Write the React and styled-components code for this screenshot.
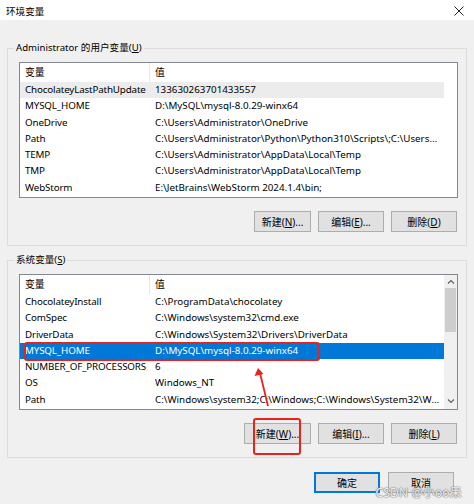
import styled, { createGlobalStyle } from "styled-components"

const GlobalStyle = createGlobalStyle`
  body {
    margin: 0;
    background: #f0f0f0;
    font-family: "Segoe UI", "Noto Sans", "Noto Sans CJK SC", sans-serif;
    font-size: 9.8px;
    color: #000;
  }
`

const Window = styled.div`
  position: relative;
  width: 474px;
  height: 504px;
  background: #f0f0f0;
  overflow: hidden;
  display: flex;
  flex-direction: column;
`

const TitleBar = styled.div`
  height: 20px;
  background: #fff;
  display: flex;
  align-items: center;
  justify-content: space-between;
  padding: 2px 10px 0 6px;
  box-sizing: border-box;
  font-size: 9.6px;
`

const Body = styled.div`
  padding: 0 7px;
  display: flex;
  flex-direction: column;
`

const Group = styled.fieldset`
  margin: ${(p) => p.$top}px 0 0;
  padding: 0 8px 13px 11px;
  border: 1px solid #dcdcdc;
  min-width: 0;
`

const Legend = styled.legend`
  margin-left: -5px;
  padding: 0 2px;
  line-height: 14px;
  font-size: 9.6px;
`

const ListBox = styled.div`
  margin-top: 7px;
  height: 136px;
  box-sizing: border-box;
  border: 1px solid #828790;
  background: #fff;
  display: flex;
`

const Table = styled.div`
  width: 424px;
  display: flex;
  flex-direction: column;
`

const Row = styled.div`
  display: flex;
  height: ${(p) => (p.$header ? "19px" : "16.3px")};
  align-items: center;
  background: ${(p) => (p.$selected ? "#0078d7" : p.$hover ? "#ececec" : "transparent")};
  color: ${(p) => (p.$selected ? "#fff" : "#000")};
  white-space: nowrap;
`

const Cell = styled.div`
  box-sizing: border-box;
  width: ${(p) => p.$w}px;
  flex-shrink: 0;
  padding-left: 5px;
  overflow: ${(p) => (p.$clip ? "hidden" : "visible")};
  text-overflow: ellipsis;
  letter-spacing: ${(p) => (p.$name ? "-0.15px" : "0")};
  border-right: ${(p) => (p.$sep ? "1px solid #e5e5e5" : "none")};
  height: 100%;
  line-height: ${(p) => (p.$head ? "19px" : "16.3px")};
`

const Scrollbar = styled.div`
  width: 13px;
  background: #f0f0f0;
  display: flex;
  flex-direction: column;
  align-items: center;
`

const ScrollArrow = styled.div`
  height: ${(p) => (p.$down ? 16 : 13)}px;
  display: flex;
  align-items: center;
  justify-content: center;
`

const Thumb = styled.div`
  width: 11px;
  height: 44px;
  background: #cdcdcd;
`

const Spacer = styled.div`
  flex: 1;
`

const ButtonRow = styled.div`
  display: flex;
  justify-content: flex-end;
  gap: 7px;
  margin-top: 13px;
  padding-right: 1px;
`

const Button = styled.div`
  box-sizing: border-box;
  width: ${(p) => p.$w || 66}px;
  height: 21px;
  background: #e1e1e1;
  border: ${(p) => (p.$default ? "2px solid #0078d7" : "1px solid #adadad")};
  display: flex;
  align-items: center;
  justify-content: center;
  font-size: 10px;
  u {
    text-decoration: underline;
  }
`

const DialogButtons = styled.div`
  display: flex;
  justify-content: flex-end;
  gap: 8px;
  margin-top: 14px;
  padding-right: 13px;
`

const Mark = styled.div`
  position: absolute;
  border: 2px solid #e8231c;
  border-radius: 3px;
  left: ${(p) => p.$x}px;
  top: ${(p) => p.$y}px;
  width: ${(p) => p.$w}px;
  height: ${(p) => p.$h}px;
  box-sizing: border-box;
  pointer-events: none;
`

const Arrow = styled.svg`
  position: absolute;
  left: 250px;
  top: 362px;
  pointer-events: none;
`

const Watermark = styled.div`
  position: absolute;
  right: 12px;
  bottom: 3px;
  font-size: 12px;
  color: rgba(255, 255, 255, 0.9);
  text-shadow: 0 0 1px #777, 0 0 1px #777, 0 0 2px #999;
  letter-spacing: 0.2px;
`

const Chevron = ({ up }) => (
  <svg width="8" height="5" viewBox="0 0 8 5">
    <path
      d={up ? "M1 4.5 L4 1.5 L7 4.5" : "M1 0.5 L4 3.5 L7 0.5"}
      fill="none"
      stroke="#606060"
      strokeWidth="1.2"
    />
  </svg>
)

const userVars = [
  ["ChocolateyLastPathUpdate", "133630263701433557"],
  ["MYSQL_HOME", "D:\\MySQL\\mysql-8.0.29-winx64"],
  ["OneDrive", "C:\\Users\\Administrator\\OneDrive"],
  ["Path", "C:\\Users\\Administrator\\Python\\Python310\\Scripts\\;C:\\Users\\Administrator\\AppData"],
  ["TEMP", "C:\\Users\\Administrator\\AppData\\Local\\Temp"],
  ["TMP", "C:\\Users\\Administrator\\AppData\\Local\\Temp"],
  ["WebStorm", "E:\\JetBrains\\WebStorm 2024.1.4\\bin;"],
]

const sysVars = [
  ["ChocolateyInstall", "C:\\ProgramData\\chocolatey"],
  ["ComSpec", "C:\\Windows\\system32\\cmd.exe"],
  ["DriverData", "C:\\Windows\\System32\\Drivers\\DriverData"],
  ["MYSQL_HOME", "D:\\MySQL\\mysql-8.0.29-winx64"],
  ["NUMBER_OF_PROCESSORS", "6"],
  ["OS", "Windows_NT"],
  ["Path", "C:\\Windows\\system32;C:\\Windows;C:\\Windows\\System32\\Wbem;C:\\Windows"],
]

const VarList = ({ rows, hover, selected, scroll }) => (
  <ListBox>
    <Table>
      <Row $header>
        <Cell $w={130} $sep $head>变量</Cell>
        <Cell $w={294} $head>值</Cell>
      </Row>
      {rows.map(([name, value], i) => (
        <Row key={name + i} $hover={i === hover} $selected={i === selected}>
          <Cell $w={130} $name>
            {name}
          </Cell>
          <Cell $w={290} $clip>
            {value}
          </Cell>
        </Row>
      ))}
    </Table>
    {scroll && (
      <Scrollbar>
        <ScrollArrow>
          <Chevron up />
        </ScrollArrow>
        <Thumb />
        <Spacer />
        <ScrollArrow $down>
          <Chevron />
        </ScrollArrow>
      </Scrollbar>
    )}
  </ListBox>
)

const App = () => {
  return (
    <Window>
      <GlobalStyle />
      <TitleBar>
        <span>环境变量</span>
        <svg width="10" height="10" viewBox="0 0 10 10">
          <path d="M0.5 0.5 L9.5 9.5 M9.5 0.5 L0.5 9.5" stroke="#222" strokeWidth="1" />
        </svg>
      </TitleBar>
      <Body>
        <Group $top={21}>
          <Legend>
            Administrator 的用户变量(<u>U</u>)
          </Legend>
          <VarList rows={userVars} hover={0} />
          <ButtonRow>
            <Button $w={57}>
              新建(<u>N</u>)...
            </Button>
            <Button>
              编辑(<u>E</u>)...
            </Button>
            <Button>
              删除(<u>D</u>)
            </Button>
          </ButtonRow>
        </Group>
        <Group $top={7}>
          <Legend>
            系统变量(<u>S</u>)
          </Legend>
          <VarList rows={sysVars} selected={3} scroll />
          <ButtonRow>
            <Button $w={67}>
              新建(<u>W</u>)...
            </Button>
            <Button>
              编辑(<u>I</u>)...
            </Button>
            <Button>
              删除(<u>L</u>)
            </Button>
          </ButtonRow>
        </Group>
        <DialogButtons>
          <Button $default>确定</Button>
          <Button>取消</Button>
        </DialogButtons>
      </Body>

      <Mark $x={24} $y={342} $w={296} $h={19} />
      <Mark $x={253} $y={418} $w={48} $h={37} />
      <Arrow width="30" height="46" viewBox="0 0 30 46">
        <path d="M18 44 L9.5 9" stroke="#e8231c" strokeWidth="1.8" fill="none" />
        <path d="M8 6 L4.5 14 L13.5 12 Z" fill="#e8231c" />
      </Arrow>
      <Watermark>CSDN @小oo呆</Watermark>
    </Window>
  )
}

export default App
